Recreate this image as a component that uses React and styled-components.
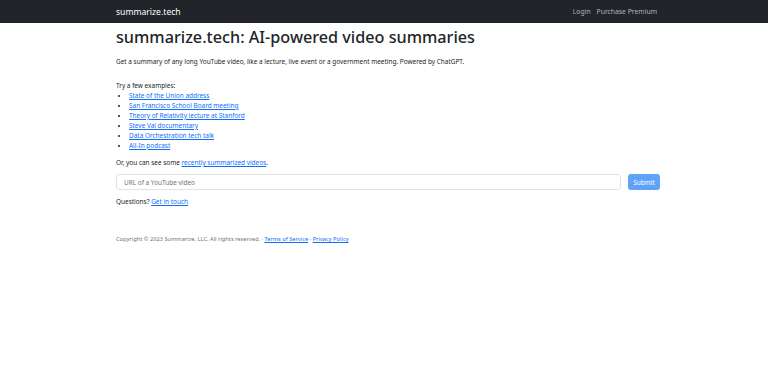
import React from 'react';
import styled, { createGlobalStyle } from 'styled-components';

const GlobalStyle = createGlobalStyle`
  html, body { margin: 0; padding: 0; background: #fff; }
  body {
    font-family: "Noto Sans", "Open Sans", sans-serif;
    color: #212529;
  }
`;

const Navbar = styled.nav`
  height: 23px;
  background: #212529;
  display: flex;
  align-items: center;
`;

const NavInner = styled.div`
  width: 544px;
  margin-left: 116px;
  display: flex;
  align-items: center;
  justify-content: space-between;
`;

const Brand = styled.a`
  color: #fff;
  font-size: 8.6px;
  text-decoration: none;
`;

const NavLinks = styled.div`
  display: flex;
  gap: 6px;
  margin-right: 3px;
`;

const NavLink = styled.a`
  color: rgba(255, 255, 255, 0.65);
  font-size: 6.8px;
  text-decoration: none;
`;

const Main = styled.main`
  width: 544px;
  margin-left: 116px;
  padding-top: 2px;
  display: flex;
  flex-direction: column;
`;

const Title = styled.h1`
  margin: 0;
  font-size: 16.2px;
  font-weight: 500;
  line-height: 24px;
`;

const Text = styled.p`
  margin: ${({ $mt }) => $mt || 0}px 0 0;
  line-height: 10px;
  color: ${({ $muted }) => ($muted ? '#6c757d' : '#212529')};
  font-size: ${({ $small }) => ($small ? '5.7px' : '6.45px')};
`;

const Link = styled.a`
  color: #0d6efd;
  text-decoration: underline;
`;

const ExampleList = styled.ul`
  margin: 0;
  padding-left: 13px;
  font-size: 6.45px;
  line-height: 10px;
`;

const Form = styled.form`
  display: flex;
  gap: 7px;
  margin-top: 6px;
`;

const Input = styled.input`
  flex: 1;
  height: 16px;
  box-sizing: border-box;
  border: 1px solid #dee2e6;
  border-radius: 3px;
  padding: 0 7px;
  font-family: inherit;
  font-size: 6.45px;
  color: #212529;
  &::placeholder { color: #6c757d; }
`;

const SubmitButton = styled.button`
  width: 32px;
  height: 16px;
  border: none;
  border-radius: 3px;
  background: #5ea3f7;
  color: #fff;
  font-family: inherit;
  font-size: 6.45px;
  padding: 0;
`;

const examples = [
  'State of the Union address',
  'San Francisco School Board meeting',
  'Theory of Relativity lecture at Stanford',
  'Steve Vai documentary',
  'Data Orchestration tech talk',
  'All-In podcast',
];

export default function App() {
  return (
    <>
      <GlobalStyle />
      <Navbar>
        <NavInner>
          <Brand href="#">summarize.tech</Brand>
          <NavLinks>
            <NavLink href="#">Login</NavLink>
            <NavLink href="#">Purchase Premium</NavLink>
          </NavLinks>
        </NavInner>
      </Navbar>
      <Main>
        <Title>summarize.tech: AI-powered video summaries</Title>
        <Text $mt={8}>
          Get a summary of any long YouTube video, like a lecture, live event or a government meeting. Powered by ChatGPT.
        </Text>
        <Text $mt={14}>Try a few examples:</Text>
        <ExampleList>
          {examples.map((e) => (
            <li key={e}><Link href="#">{e}</Link></li>
          ))}
        </ExampleList>
        <Text $mt={7}>
          Or, you can see some <Link href="#">recently summarized videos</Link>.
        </Text>
        <Form onSubmit={(e) => e.preventDefault()}>
          <Input placeholder="URL of a YouTube video" />
          <SubmitButton type="submit">Submit</SubmitButton>
        </Form>
        <Text $mt={7}>
          Questions? <Link href="#">Get in touch</Link>
        </Text>
        <Text $mt={27} $muted $small>
          Copyright © 2023 Summarize, LLC. All rights reserved. · <Link href="#">Terms of Service</Link> · <Link href="#">Privacy Policy</Link>
        </Text>
      </Main>
    </>
  );
}
